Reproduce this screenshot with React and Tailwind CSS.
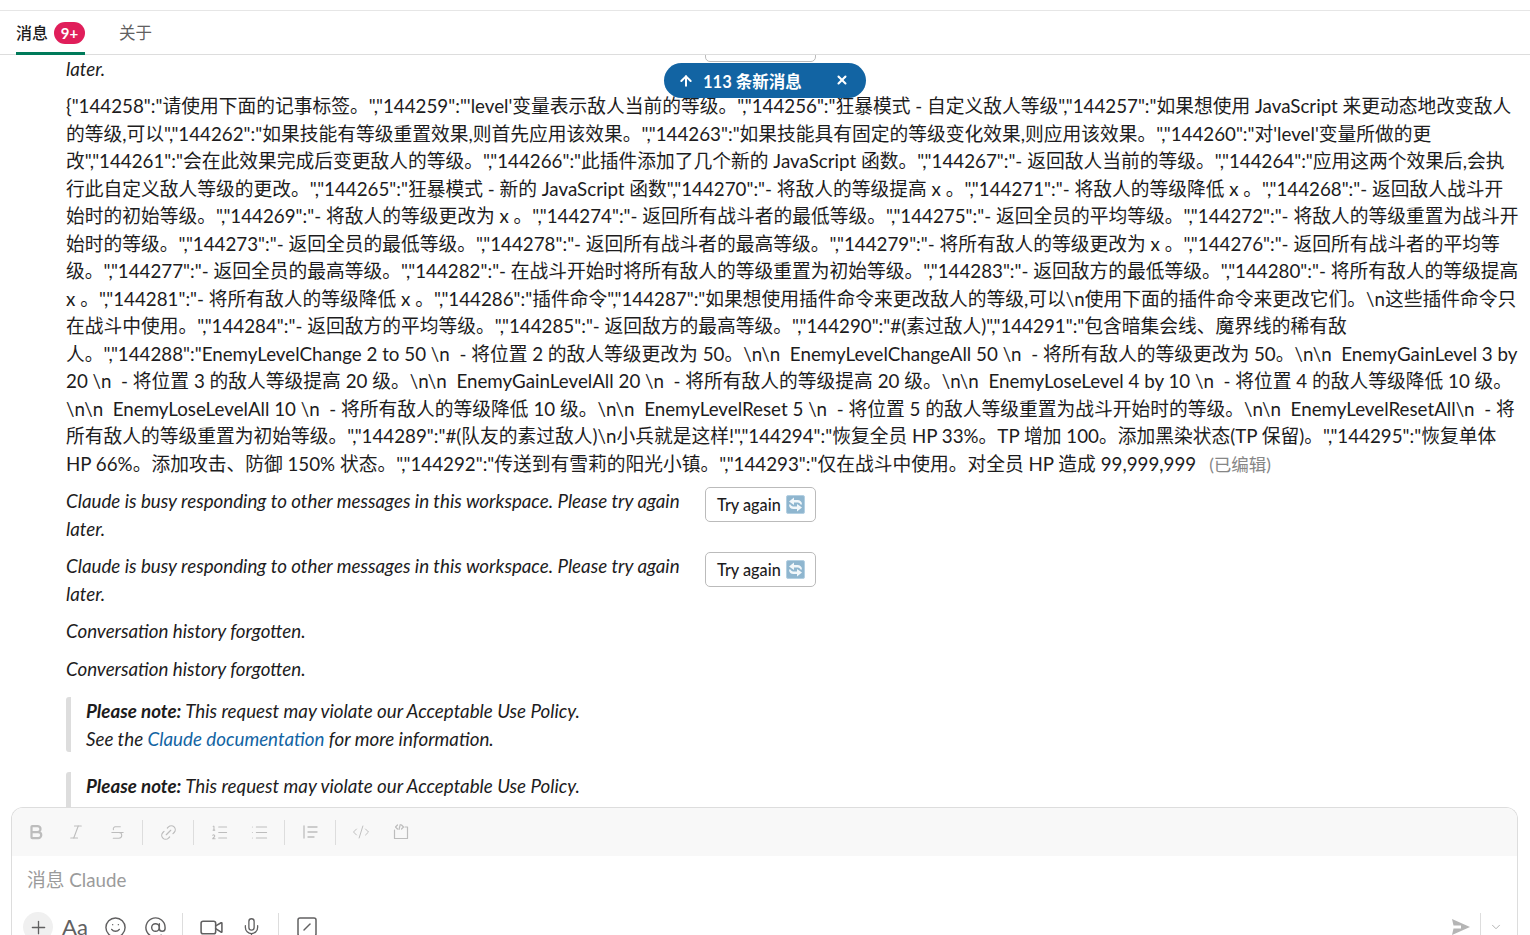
import React from "react";
import {
  Bold, Italic, Strikethrough, Link2, ListOrdered, List, CodeXml, Plus, Smile, AtSign, Video, Mic, SquareSlash, ChevronDown, ArrowUp, X,
} from "lucide-react";

const lines = [
  `{"144258":"请使用下面的记事标签。","144259":"'level'变量表示敌人当前的等级。","144256":"狂暴模式 - 自定义敌人等级","144257":"如果想使用 JavaScript 来更动态地改变敌人`,
  `的等级,可以","144262":"如果技能有等级重置效果,则首先应用该效果。","144263":"如果技能具有固定的等级变化效果,则应用该效果。","144260":"对'level'变量所做的更`,
  `改","144261":"会在此效果完成后变更敌人的等级。","144266":"此插件添加了几个新的 JavaScript 函数。","144267":"- 返回敌人当前的等级。","144264":"应用这两个效果后,会执`,
  `行此自定义敌人等级的更改。","144265":"狂暴模式 - 新的 JavaScript 函数","144270":"- 将敌人的等级提高 x 。","144271":"- 将敌人的等级降低 x 。","144268":"- 返回敌人战斗开`,
  `始时的初始等级。","144269":"- 将敌人的等级更改为 x 。","144274":"- 返回所有战斗者的最低等级。","144275":"- 返回全员的平均等级。","144272":"- 将敌人的等级重置为战斗开`,
  `始时的等级。","144273":"- 返回全员的最低等级。","144278":"- 返回所有战斗者的最高等级。","144279":"- 将所有敌人的等级更改为 x 。","144276":"- 返回所有战斗者的平均等`,
  `级。","144277":"- 返回全员的最高等级。","144282":"- 在战斗开始时将所有敌人的等级重置为初始等级。","144283":"- 返回敌方的最低等级。","144280":"- 将所有敌人的等级提高`,
  `x 。","144281":"- 将所有敌人的等级降低 x 。","144286":"插件命令","144287":"如果想使用插件命令来更改敌人的等级,可以\\n使用下面的插件命令来更改它们。\\n这些插件命令只`,
  `在战斗中使用。","144284":"- 返回敌方的平均等级。","144285":"- 返回敌方的最高等级。","144290":"#(素过敌人)","144291":"包含暗集会线、魔界线的稀有敌`,
  `人。","144288":"EnemyLevelChange 2 to 50 \\n  - 将位置 2 的敌人等级更改为 50。\\n\\n  EnemyLevelChangeAll 50 \\n  - 将所有敌人的等级更改为 50。\\n\\n  EnemyGainLevel 3 by`,
  `20 \\n  - 将位置 3 的敌人等级提高 20 级。\\n\\n  EnemyGainLevelAll 20 \\n  - 将所有敌人的等级提高 20 级。\\n\\n  EnemyLoseLevel 4 by 10 \\n  - 将位置 4 的敌人等级降低 10 级。`,
  `\\n\\n  EnemyLoseLevelAll 10 \\n  - 将所有敌人的等级降低 10 级。\\n\\n  EnemyLevelReset 5 \\n  - 将位置 5 的敌人等级重置为战斗开始时的等级。\\n\\n  EnemyLevelResetAll\\n  - 将`,
  `所有敌人的等级重置为初始等级。","144289":"#(队友的素过敌人)\\n小兵就是这样!","144294":"恢复全员 HP 33%。TP 增加 100。添加黑染状态(TP 保留)。","144295":"恢复单体`,
  `HP 66%。添加攻击、防御 150% 状态。","144292":"传送到有雪莉的阳光小镇。","144293":"仅在战斗中使用。对全员 HP 造成 99,999,999`,
];

function RetryIcon() {
  return (
    <svg width="19" height="19" viewBox="0 0 19 19" className="ml-[5px] shrink-0">
      <rect x="0.500" y="0.500" width="18" height="18" rx="1.500" fill="#8fb6cf" stroke="#b4d0e2" />
      <g transform="translate(19 0) scale(-1 1)">
        <path d="M3 9.500C3 6.500 5 5 7.500 5H11V2.500L16 6.500L11 10V7.500H8C6.500 7.500 5 8 4.500 9.500Z" fill="#f2f7fa" />
        <path d="M16 9.500C16 12.500 14 14 11.500 14H8V16.500L3 12.500L8 9V11.500H11C12.500 11.500 14 11 14.500 9.500Z" fill="#f2f7fa" />
      </g>
    </svg>
  );
}

function BusyRow() {
  return (
    <div className="flex items-start">
      <p className="w-[639px] italic">
        Claude is busy responding to other messages in this workspace. Please try again later.
      </p>
      <button className="flex items-center h-[35px] w-[111px] pl-[11px] border border-[#bbbbbb] rounded-[5px] text-[16.250px] leading-none font-medium text-[#1d1c1d] bg-white">
        <span className="pt-[2px]">Try again</span>
        <RetryIcon />
      </button>
    </div>
  );
}

function Sep({ className = "h-[25px]" }) {
  return <span className={`block shrink-0 w-px bg-[#dddddd] ${className}`} />;
}

function ToolBtn({ children, w = "w-[40px]" }) {
  return <span className={`${w} flex justify-center items-center text-[#bdbdbd]`}>{children}</span>;
}

export default function App() {
  return (
    <div
      className="h-[935px] w-[1530px] overflow-hidden flex flex-col bg-white text-[#1d1c1d] text-[18.750px] leading-[27.500px]"
      style={{ fontFamily: 'Lato, "Noto Sans CJK SC", sans-serif' }}
    >
      <div className="h-[11px] shrink-0 border-b border-[#e6e6e6]" />
      <div className="h-[44px] shrink-0 flex items-stretch pl-4 border-b border-[#dddddd]">
        <div className="flex items-center gap-[6px] w-[69px] h-[44px] border-b-[3px] border-[#007a5a] pt-[3px]">
          <span className="text-[16px] font-medium text-[#1d1c1d]">消息</span>
          <span className="w-[31px] h-[22px] rounded-full bg-[#e01e5a] text-white text-[15px] leading-[22px] font-bold text-center">9+</span>
        </div>
        <div className="ml-[34px] flex items-center pt-[3px] text-[16.500px] text-[#616061]">关于</div>
      </div>

      <div className="relative flex-1 min-h-0 overflow-hidden">
        <div className="-mt-[28px] pl-[66px] pr-3 flex flex-col gap-[10px]">
          <BusyRow />
          <p className="whitespace-pre">
            {lines.map((l, i) => (
              <React.Fragment key={i}>
                {l}
                {i < lines.length - 1 ? "\n" : null}
              </React.Fragment>
            ))}
            <span className="ml-[13px] text-[17.500px] leading-none text-[#868686]">(已编辑)</span>
          </p>
          <BusyRow />
          <BusyRow />
          <p className="italic">Conversation history forgotten.</p>
          <p className="italic">Conversation history forgotten.</p>
          <div className="mt-[5px] flex flex-col gap-5 italic">
            <div className="border-l-[5px] border-[#dddddd] rounded-[3px] pl-[15px]">
              <p><b>Please note:</b> This request may violate our Acceptable Use Policy.</p>
              <p>See the <span className="text-[#1264a3]">Claude documentation</span> for more information.</p>
            </div>
            <div className="border-l-[5px] border-[#dddddd] rounded-[3px] pl-[15px]">
              <p><b>Please note:</b> This request may violate our Acceptable Use Policy.</p>
              <p>See the <span className="text-[#1264a3]">Claude documentation</span> for more information.</p>
            </div>
          </div>
        </div>
        <div className="absolute left-[664px] top-2 w-[202px] h-[35px] rounded-full bg-[#1264a3] text-white flex items-center pl-[14px] pr-[17px]">
          <ArrowUp size={16} strokeWidth={3} />
          <span className="ml-[9px] pt-[3px] text-[16.500px] font-bold leading-none">113 条新消息</span>
          <X size={14} strokeWidth={3.500} className="ml-auto -mt-[2px]" />
        </div>
      </div>

      <div className="h-[128px] shrink-0 ml-[11px] mr-3 border border-b-0 border-[#dddddd] rounded-t-xl overflow-hidden">
        <div className="h-[48px] bg-[#f8f8f8] flex items-center pl-[4px]">
          <ToolBtn><Bold size={18} strokeWidth={3} /></ToolBtn>
          <ToolBtn><Italic size={18} strokeWidth={1.500} /></ToolBtn>
          <ToolBtn w="w-[42px]"><Strikethrough size={17} strokeWidth={1.500} /></ToolBtn>
          <span className="w-[4px]" />
          <Sep />
          <ToolBtn w="w-[50px]"><Link2 size={19} strokeWidth={1.500} className="-rotate-45" /></ToolBtn>
          <Sep />
          <span className="w-[5px]" />
          <ToolBtn><ListOrdered size={19} strokeWidth={1.300} /></ToolBtn>
          <ToolBtn><List size={19} strokeWidth={1.300} /></ToolBtn>
          <span className="w-[5px]" />
          <Sep />
          <span className="w-[5px]" />
          <ToolBtn>
            <svg width="18" height="18" viewBox="0 0 18 18" fill="none" stroke="currentColor" strokeWidth="1.300" strokeLinecap="round">
              <path d="M3 3v12M7 4h9M7 9h9M7 14h6" />
            </svg>
          </ToolBtn>
          <span className="w-[5px]" />
          <Sep />
          <span className="w-[5px]" />
          <ToolBtn><CodeXml size={18} strokeWidth={1.300} /></ToolBtn>
          <ToolBtn>
            <svg width="18" height="18" viewBox="0 0 18 18" fill="none" stroke="currentColor" strokeWidth="1.200" strokeLinecap="round" strokeLinejoin="round">
              <path d="M2.500 7v8.500h13V4h-2.500M5.500 2 3.500 4l2 2M9.500 2l2 2-2 2M8.300 1.500 7 6.500" />
            </svg>
          </ToolBtn>
        </div>
        <div className="h-[48px] pl-[15px] flex items-center text-[18.750px] text-[#9b9b9b]">消息 Claude</div>
        <div className="h-[46px] pt-2 pl-[11px] pr-[13px] flex items-start text-[#616061]">
          <span className="w-[30px] h-[30px] shrink-0 rounded-full bg-[#f0f0f0] flex items-center justify-center"><Plus size={21} strokeWidth={1.500} /></span>
          <span className="w-[44px] text-center text-[22px] leading-[30px]">Aa</span>
          <span className="w-[36px] h-[30px] flex items-center justify-center"><Smile size={23} strokeWidth={1.500} /></span>
          <span className="w-[44px] h-[30px] flex items-center justify-center"><AtSign size={23} strokeWidth={1.500} /></span>
          <span className="w-[5px]" />
          <Sep className="h-[26px] mt-[1px]" />
          <span className="ml-[8px] w-[40px] h-[30px] flex items-center justify-center"><Video size={25} strokeWidth={1.500} /></span>
          <span className="w-[40px] h-[30px] flex items-center justify-center"><Mic size={21} strokeWidth={1.500} /></span>
          <span className="w-[7px]" />
          <Sep className="h-[26px] mt-[1px]" />
          <span className="ml-[8px] w-[40px] h-[30px] flex items-center justify-center"><SquareSlash size={24} strokeWidth={1.500} /></span>
          <span className="ml-auto w-[20px] h-[30px] flex items-center justify-center text-[#b5b5b5]">
            <svg width="20" height="18" viewBox="0 0 20 18" fill="currentColor"><path d="M1 1 19 9 1 17 2.500 10.500H10V7.500H2.500Z" /></svg>
          </span>
          <span className="w-[9px]" />
          <Sep className="h-[26px] mt-[1px]" />
          <span className="ml-[7px] w-[16px] h-[30px] flex items-center justify-center text-[#a8a8a8]"><ChevronDown size={14} strokeWidth={1.500} /></span>
        </div>
      </div>
    </div>
  );
}
